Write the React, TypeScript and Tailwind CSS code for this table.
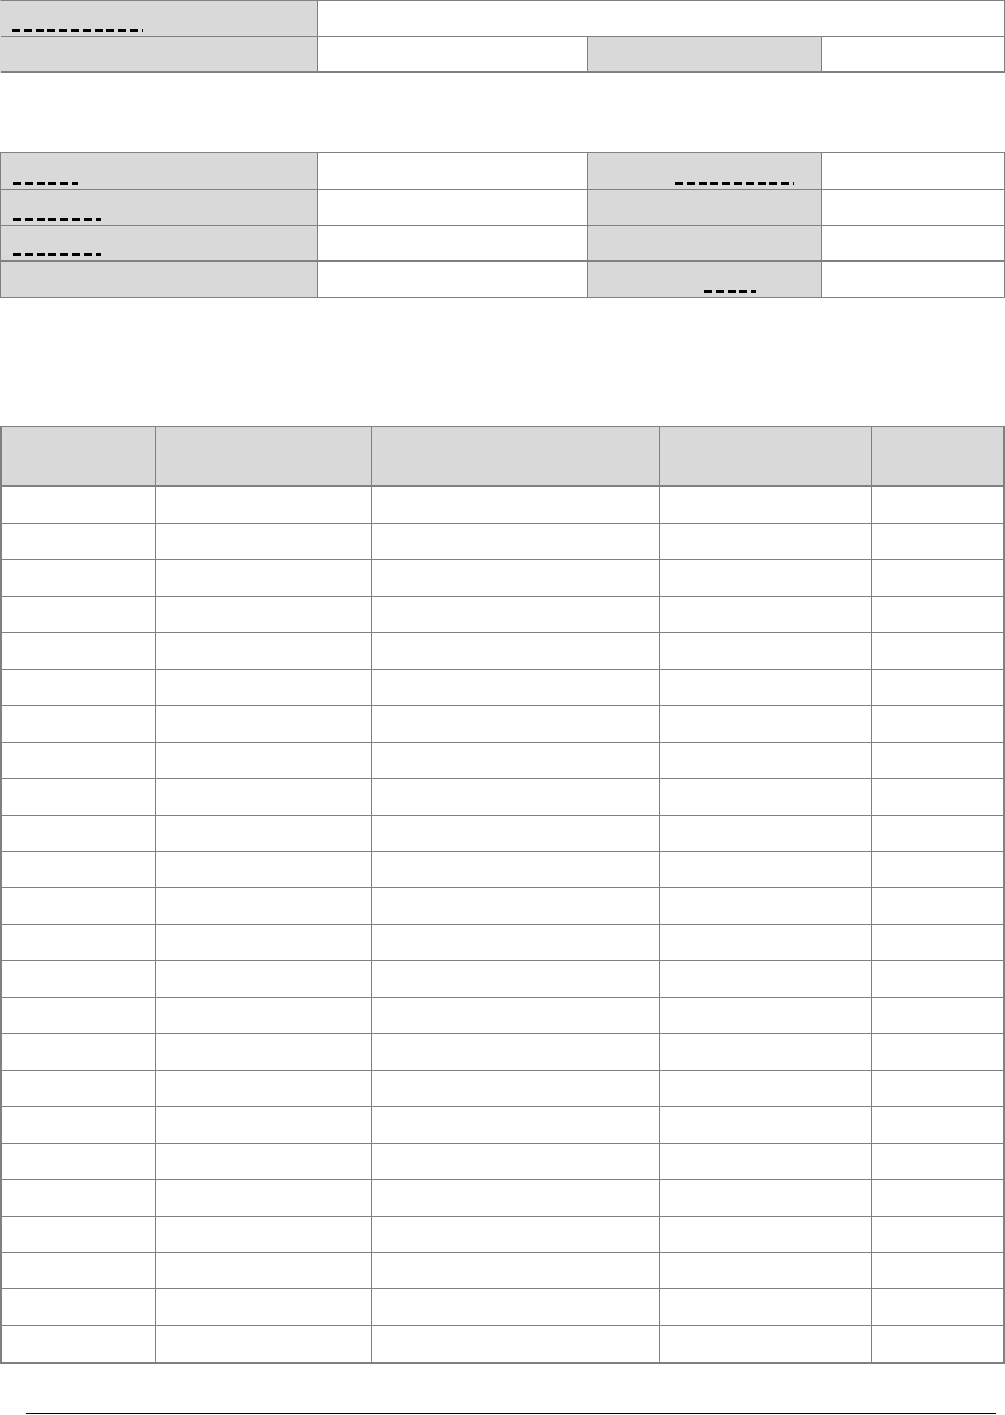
import React from "react";

const Dash = ({ className }: { className: string }) => (
  <span
    className={`block h-[3px] bg-[repeating-linear-gradient(90deg,#000_0px,#000_8px,transparent_8px,transparent_11.8px)] ${className}`}
  />
);

const cell = "h-full border-r border-[#808080] flex items-end pb-[4px]";
const grey = "bg-[#d9d9d9]";

// four-column rows shared by the two upper tables
const FourCol = ({
  first,
  third,
  thick,
}: {
  first?: React.ReactNode;
  third?: React.ReactNode;
  thick?: boolean;
}) => (
  <div
    className={`flex h-[36.3px] border-[#808080] ${thick ? "border-b-2" : "border-b"}`}
  >
    <div className={`${cell} ${grey} w-[317px] pl-[12px]`}>{first}</div>
    <div className={`${cell} w-[270px]`} />
    <div className={`${cell} ${grey} w-[234px]`}>{third}</div>
    <div className={`${cell} flex-1`} />
  </div>
);

const columns = ["w-[154px]", "w-[216px]", "w-[288px]", "w-[212px]", "flex-1"];

export default function App() {
  const rows = Array.from({ length: 24 });

  return (
    <div className="relative w-[1005px] h-[1415px] overflow-hidden bg-white font-['Liberation_Sans',Arial,sans-serif] text-[13px] text-black">
      {/* general info */}
      <div className="w-[1005px] border-t border-[#808080] border-l border-l-[#d9d9d9]">
        <div className="flex h-[36px] border-b border-[#808080]">
          <div className={`${cell} ${grey} w-[317px] pl-[11px]`}>
            <Dash className="w-[131px]" />
          </div>
          <div className={`${cell} flex-1`} />
        </div>
        <FourCol thick />
      </div>

      {/* details */}
      <div className="mt-[79px] w-[1005px] border-t border-l border-[#808080]">
        <FourCol
          first={<Dash className="w-[65px]" />}
          third={<Dash className="ml-[87px] w-[119px]" />}
        />
        <FourCol first={<Dash className="w-[88px]" />} />
        <FourCol first={<Dash className="w-[88px]" />} thick />
        <FourCol third={<Dash className="ml-[116px] w-[52px]" />} />
      </div>

      {/* list */}
      <div className="mt-[128px] w-[1005px] border-t border-l-2 border-r-2 border-b-2 border-[#808080]">
        <div className="flex h-[60px] border-b-2 border-[#808080] bg-[#d9d9d9]">
          {columns.map((w, i) => (
            <div
              key={i}
              className={`h-full ${w} ${i < columns.length - 1 ? "border-r border-[#808080]" : ""}`}
            />
          ))}
        </div>
        {rows.map((_, r) => (
          <div
            key={r}
            className={`flex h-[36.46px] ${r < rows.length - 1 ? "border-b border-[#808080]" : ""}`}
          >
            {columns.map((w, i) => (
              <div
                key={i}
                className={`h-full ${w} ${i < columns.length - 1 ? "border-r border-[#808080]" : ""}`}
              />
            ))}
          </div>
        ))}
      </div>

      {/* footer rule */}
      <div className="mt-[49px] ml-[26px] w-[970px] h-px bg-black" />
    </div>
  );
}
